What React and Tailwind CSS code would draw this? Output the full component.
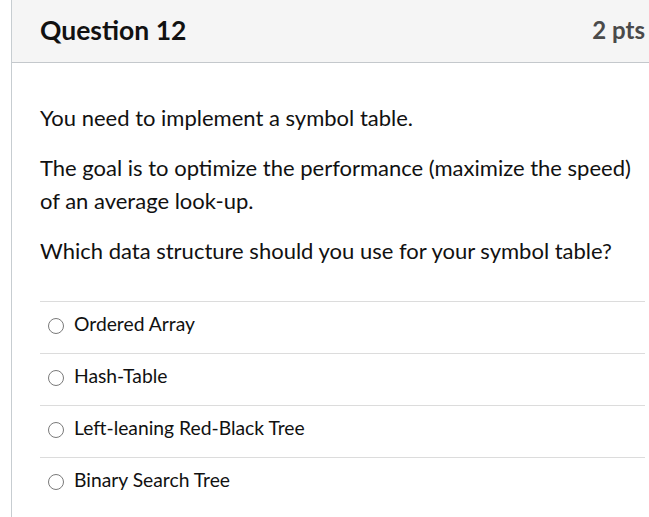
export default function App() {
  const answers = [
    "Ordered Array",
    "Hash-Table",
    "Left-leaning Red-Black Tree",
    "Binary Search Tree",
  ];
  return (
    <div
      className="w-[649px] h-[517px] bg-white overflow-hidden"
      style={{ fontFamily: "Lato, 'Open Sans', sans-serif" }}
    >
      <div className="ml-[11px] h-full border-l border-[#c7cdd1] flex flex-col">
        <div className="h-[63px] bg-[#f5f5f5] border-b border-[#c4c8cc] flex items-center justify-between pl-[28px] pr-[4px] shrink-0">
          <div className="text-[26.5px] font-bold text-[#111] leading-none pb-[2px]">
            Question 12
          </div>
          <div className="text-[24px] font-bold text-[#4a4a4a] leading-none pb-[2px]">
            2 pts
          </div>
        </div>
        <div className="pl-[28px] pr-[4px] pt-[38px] text-[#111]">
          <p className="text-[22px] leading-[33px] mb-[17px]">
            You need to implement a symbol table.
          </p>
          <p className="text-[22px] leading-[33px] mb-[17px]">
            The goal is to optimize the performance (maximize the speed) of an
            average look-up.
          </p>
          <p className="text-[22px] leading-[33px]">
            Which data structure should you use for your symbol table?
          </p>
          <div className="mt-[34px]">
            {answers.map((a) => (
              <div
                key={a}
                className="h-[52px] border-t border-[#dcdcdc] flex items-center pl-[8px] pb-[4px]"
              >
                <span className="w-[16px] h-[16px] rounded-full border border-[#7a7a7a] bg-white shrink-0" />
                <span className="ml-[10px] text-[19.3px] text-[#111] leading-none pb-[3px]">
                  {a}
                </span>
              </div>
            ))}
          </div>
        </div>
      </div>
    </div>
  );
}
